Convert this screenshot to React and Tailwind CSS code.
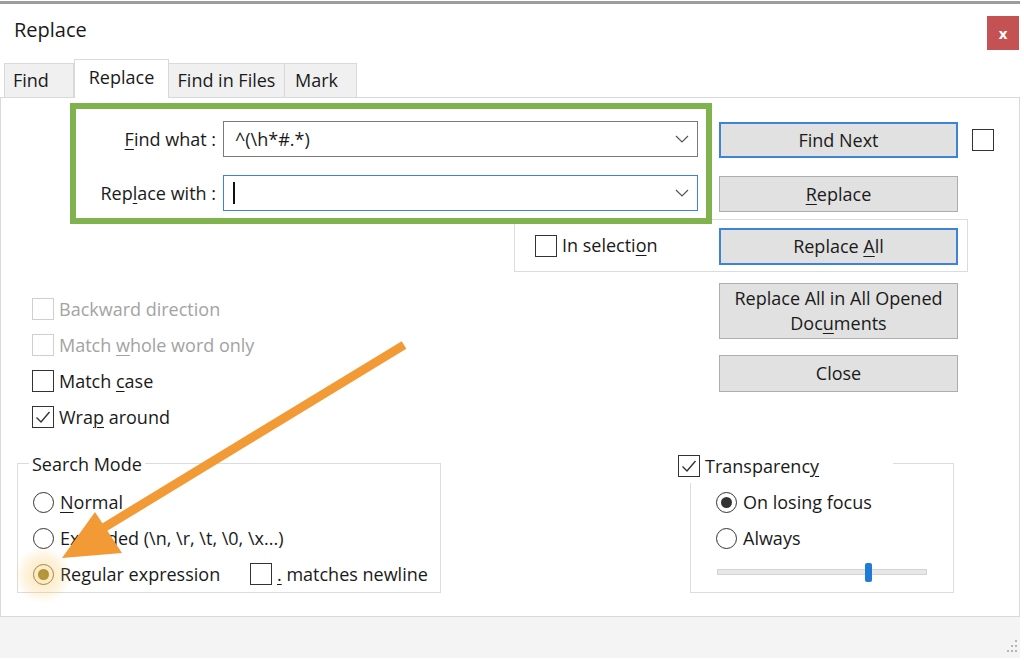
import React from 'react'

function Checkbox({ checked, disabled }) {
    return (
        <div className={`w-[22px] h-[22px] shrink-0 border-[1.5px] bg-white flex items-center justify-center ${disabled ? 'border-[#cfcfcf]' : 'border-[#333333]'}`}>
            {checked && (
                <svg width="18" height="18" viewBox="0 0 18 18" fill="none">
                    <path d="M2.5 9.5l4.5 4.5 8.5-10" stroke="#333" strokeWidth="1.4" />
                </svg>
            )}
        </div>
    )
}

function Radio({ checked, tinted }) {
    return (
        <div className={`w-[21px] h-[21px] shrink-0 rounded-full border-[1.5px] bg-white flex items-center justify-center ${tinted ? 'border-[#6e6a50]' : 'border-[#333333]'}`}>
            {checked && <div className={`w-[11px] h-[11px] rounded-full ${tinted ? 'bg-[#857528]' : 'bg-[#333333]'}`}></div>}
        </div>
    )
}

function Btn({ children, focused, h = 'h-[36px]' }) {
    return (
        <div className={`w-[239px] ${h} bg-[#e1e1e1] flex items-center justify-center text-center leading-[25px] text-[#1a1a1a] ${focused ? 'border-2 border-[#3d83d9]' : 'border border-[#adadad]'}`}>
            <span>{children}</span>
        </div>
    )
}

function Combo({ focused, children }) {
    return (
        <div className={`w-[475px] h-[36px] bg-white flex items-center justify-between pl-[11px] pr-[8px] ${focused ? 'border border-[#3d83d9]' : 'border border-[#7a7a7a]'}`}>
            <div className="flex items-center">{children}</div>
            <svg width="14" height="10" viewBox="0 0 14 10" fill="none">
                <path d="M1 2l6 6 6-6" stroke="#555" strokeWidth="1.2" />
            </svg>
        </div>
    )
}

const U = ({ children }) => <span className="underline underline-offset-[3px] decoration-1">{children}</span>

export default function App() {
    return (
        <div className="relative w-[1024px] h-[664px] bg-white overflow-hidden flex flex-col font-['Open_Sans',sans-serif] text-[18px] text-[#1a1a1a]">
            {/* top rule */}
            <div className="mt-[1px] w-[1020px] h-[3px] bg-[#9c9c9c]"></div>

            {/* title bar */}
            <div className="h-[55px] flex items-start justify-between pl-[14px] pr-[5px]">
                <div className="mt-[12px] text-[20px] leading-[28px]">Replace</div>
                <div className="mt-[12px] w-[32px] h-[34px] bg-[#c45252] flex items-center justify-center text-white font-bold text-[15px] leading-none">x</div>
            </div>

            {/* tabs */}
            <div className="h-[38px] flex items-end pl-[4px]">
                <div className="w-[70px] h-[34px] bg-[#f0f0f0] border border-b-0 border-[#d9d9d9] pl-[8px] flex items-center">Find</div>
                <div className="relative z-10 -mb-px w-[95px] h-[39px] bg-white border border-b-0 border-[#d9d9d9] flex items-start justify-center pt-[4px]">Replace</div>
                <div className="w-[116px] h-[34px] bg-[#f0f0f0] border border-b-0 border-l-0 border-[#d9d9d9] flex items-center justify-center">Find in Files</div>
                <div className="w-[72px] h-[34px] bg-[#f0f0f0] border border-b-0 border-l-0 border-[#d9d9d9] pl-[10px] flex items-center">Mark</div>
            </div>

            {/* panel */}
            <div className="w-[1020px] h-[520px] border border-[#d9d9d9] flex flex-col">
                {/* find / replace fields */}
                <div className="h-[126px] flex items-start">
                    <div className="relative z-10 ml-[69px] mt-[5px] w-[642px] h-[121px] border-[6px] border-[#80b24e] bg-white flex flex-col gap-[18px] pt-[12px]">
                        <div className="flex items-center gap-[7px]">
                            <div className="w-[140px] text-right"><U>F</U>ind what :</div>
                            <Combo>^(\h*#.*)</Combo>
                        </div>
                        <div className="flex items-center gap-[7px]">
                            <div className="w-[140px] text-right">Rep<U>l</U>ace with :</div>
                            <Combo focused>
                                <div className="-ml-[2px] w-[1.5px] h-[22px] bg-[#111]"></div>
                            </Combo>
                        </div>
                    </div>
                    <div className="ml-[7px] mt-[24px] flex flex-col gap-[18px]">
                        <div className="flex items-center gap-[14px]">
                            <Btn focused>Find Next</Btn>
                            <Checkbox />
                        </div>
                        <Btn><U>R</U>eplace</Btn>
                    </div>
                </div>

                {/* in selection group */}
                <div className="-mt-[5px] ml-[513px] w-[454px] h-[53px] border border-[#dcdcdc] flex items-center">
                    <div className="ml-[20px] w-[184px] flex items-center gap-[5px]">
                        <Checkbox />
                        <span>In selecti<U>o</U>n</span>
                    </div>
                    <div className="mt-[2px]">
                        <Btn focused h="h-[37px]">Replace <U>A</U>ll</Btn>
                    </div>
                </div>

                {/* options + buttons */}
                <div className="h-[191px] flex items-start">
                    <div className="w-[718px] pl-[31px] pt-[19px] flex flex-col">
                        <div className="h-[36px] flex items-center gap-[5px] text-[#a3a3a3]">
                            <Checkbox disabled />
                            <span>Backward direction</span>
                        </div>
                        <div className="h-[36px] flex items-center gap-[5px] text-[#a3a3a3]">
                            <Checkbox disabled />
                            <span>Match <U>w</U>hole word only</span>
                        </div>
                        <div className="h-[36px] flex items-center gap-[5px]">
                            <Checkbox />
                            <span>Match <U>c</U>ase</span>
                        </div>
                        <div className="h-[36px] flex items-center gap-[5px]">
                            <Checkbox checked />
                            <span>Wra<U>p</U> around</span>
                        </div>
                    </div>
                    <div className="pt-[11px] flex flex-col gap-[16px]">
                        <Btn h="h-[56px]">
                            Replace All in All Opened<br />Doc<U>u</U>ments
                        </Btn>
                        <Btn h="h-[37px]">Close</Btn>
                    </div>
                </div>

                {/* group boxes */}
                <div className="flex items-start">
                    <div className="relative ml-[16px] w-[424px] h-[130px] border border-[#dcdcdc] pt-[20px] pl-[15px] flex flex-col">
                        <div className="absolute left-[11px] -top-[13px] bg-white px-[3px] leading-[26px]">Search Mode</div>
                        <div className="h-[36px] flex items-center gap-[6px]">
                            <Radio />
                            <span><U>N</U>ormal</span>
                        </div>
                        <div className="h-[36px] flex items-center gap-[6px]">
                            <Radio />
                            <span>Extended (\n, \r, \t, \0, \x...)</span>
                        </div>
                        <div className="h-[36px] flex items-center">
                            <div className="flex items-center gap-[6px] w-[217px]">
                                <Radio checked tinted />
                                <span>Re<U>g</U>ular expression</span>
                            </div>
                            <div className="flex items-center gap-[5px]">
                                <Checkbox />
                                <span><U>.</U> matches newline</span>
                            </div>
                        </div>
                    </div>

                    <div className="relative ml-[249px] w-[264px] h-[130px] border border-[#dcdcdc] pt-[20px] pl-[25px] flex flex-col">
                        <div className="absolute -left-[13px] -top-[15px] w-[215px] h-[34px] bg-white flex items-center gap-[5px]">
                            <Checkbox checked />
                            <span>Transparenc<U>y</U></span>
                        </div>
                        <div className="h-[36px] flex items-center gap-[6px]">
                            <Radio checked />
                            <span>On losing focus</span>
                        </div>
                        <div className="h-[36px] flex items-center gap-[6px]">
                            <Radio />
                            <span>Always</span>
                        </div>
                        <div className="mt-[13px] ml-[1px] w-[210px] h-[6px] bg-[#e7e7e7] border border-[#d4d4d4] flex items-center">
                            <div className="ml-[147px] w-[7px] h-[19px] rounded-[2px] bg-[#1f7bd6]"></div>
                        </div>
                    </div>
                </div>
            </div>

            {/* footer */}
            <div className="w-[1020px] h-[41px] bg-[#f4f4f4] flex items-end justify-end pr-[2px] pb-[3px]">
                <svg width="12" height="16" viewBox="0 0 12 16">
                    <rect x="9" y="1" width="2" height="2" fill="#b5b5b5" />
                    <rect x="5" y="6" width="2" height="2" fill="#b5b5b5" />
                    <rect x="9" y="6" width="2" height="2" fill="#b5b5b5" />
                    <rect x="1" y="11" width="2" height="2" fill="#b5b5b5" />
                    <rect x="5" y="11" width="2" height="2" fill="#b5b5b5" />
                    <rect x="9" y="11" width="2" height="2" fill="#b5b5b5" />
                </svg>
            </div>

            {/* glow around selected radio */}
            <div className="absolute left-[15px] top-[546px] w-[56px] h-[58px] rounded-full bg-[radial-gradient(circle,rgba(247,196,86,0.45)_0%,rgba(247,196,86,0.2)_45%,rgba(247,196,86,0)_70%)] pointer-events-none"></div>

            {/* orange arrow annotation */}
            <svg className="absolute left-0 top-0 pointer-events-none" width="1024" height="664" viewBox="0 0 1024 664">
                <line x1="404" y1="345" x2="100" y2="530" stroke="#f29a35" strokeWidth="9" />
                <polygon points="62,558 95,512 122,553" fill="#f29a35" />
            </svg>
        </div>
    )
}
